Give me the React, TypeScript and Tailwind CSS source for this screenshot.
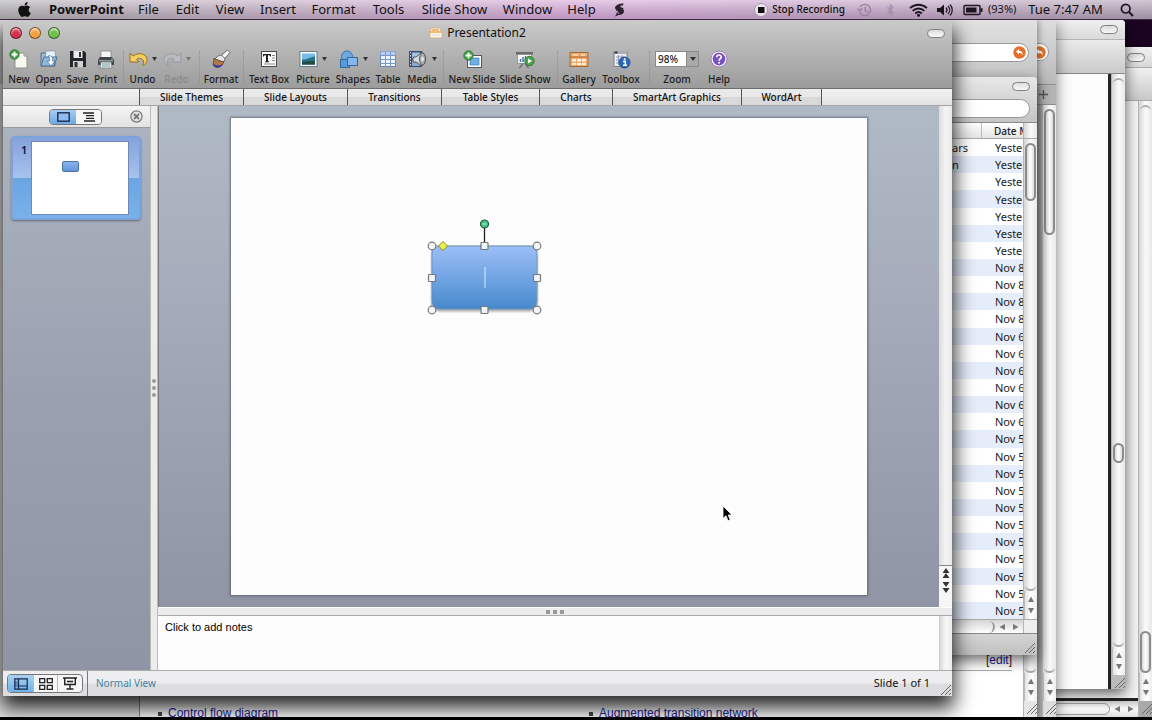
import type { ReactNode } from "react";
import { FaApple } from "react-icons/fa";

const UI = "font-['Noto_Sans','Open_Sans',sans-serif]";

/* ---------- scrollbars and window furniture ---------- */

function Tri({ dir }: { dir: "up" | "down" | "left" | "right" }) {
  const d = {
    up: "M3 0.5 6 6H0Z",
    down: "M3 5.5 6 0H0Z",
    left: "M0.5 3 6 0V6Z",
    right: "M5.5 3 0 0V6Z",
  }[dir];
  return (
    <svg width="6" height="6" viewBox="0 0 6 6" className="shrink-0">
      <path d={d} fill="#777" />
    </svg>
  );
}

function VArrows() {
  return (
    <div className="flex h-7 shrink-0 flex-col items-center justify-around border-l border-[#bbb] bg-gradient-to-r from-[#e2e2e2] via-white to-[#eee] py-0.5">
      <Tri dir="up" />
      <Tri dir="down" />
    </div>
  );
}

function Grip() {
  return (
    <svg width="14" height="14" viewBox="0 0 14 14" className="shrink-0">
      <path d="M3 13 13 3M7 13 13 7M11 13 13 11" stroke="#666" strokeWidth="1" fill="none" />
    </svg>
  );
}

const TRACK = "flex w-[14px] shrink-0 flex-col border-l border-[#b4b4b4] bg-gradient-to-r from-[#d6d6d6] via-[#fafafa] to-[#e9e9e9]";
const THUMB = "mx-px rounded-full border-2 border-[#8b8b8b] bg-gradient-to-r from-[#d8d8d8] via-white to-[#dcdcdc]";

function Pill() {
  return (
    <button
      aria-label="Toggle toolbar"
      className="h-[9px] w-[18px] rounded-full border border-[#808080] bg-gradient-to-b from-[#ddd] to-[#f8f8f8]"
    />
  );
}

function Orange() {
  return (
    <svg width="13" height="13" viewBox="0 0 13 13" className="shrink-0">
      <circle cx="6.500" cy="6.500" r="6.200" fill="#e0702a" />
      <path d="M3 5.600 6 3V4.700C8.800 4.700 10 6.200 9.600 9.300 8.800 7.500 8 6.900 6 6.900V8.300Z" fill="#fff" />
    </svg>
  );
}

/* ---------- toolbar icons ---------- */

const icons: Record<string, ReactNode> = {
  New: (
    <svg width="20" height="20" viewBox="0 0 20 20">
      <path d="M6 4h9l3 3v12H6Z" fill="#f6f8f2" stroke="#8a9384" />
      <path d="M15 4v3h3" fill="#ddd" stroke="#8a9384" />
      <circle cx="5.500" cy="5.500" r="4.700" fill="#3f9a45" stroke="#23702c" strokeWidth=".8" />
      <path d="M5.500 2.500v6M2.500 5.500h6" stroke="#fff" strokeWidth="1.800" />
    </svg>
  ),
  Open: (
    <svg width="20" height="20" viewBox="0 0 20 20">
      <path d="M2 17V4h5l2 2h7v11Z" fill="#9db9d4" stroke="#50708f" />
      <path d="M7 2h9l1 9H6Z" fill="#e9f2fa" stroke="#7890a8" strokeWidth=".7" />
      <path d="M2 17 5 8h13l-3 9Z" fill="#8db9de" stroke="#4c7194" />
      <path d="M9 7c4-1 5 2 4.500 5h2.500l-4 5-4-5h2.500c.3-2 .2-4-1.500-5Z" fill="#fff" stroke="#54789c" strokeWidth=".8" />
    </svg>
  ),
  Save: (
    <svg width="20" height="20" viewBox="0 0 20 20">
      <path d="M2 2h14l2 2v14H2Z" fill="#242528" />
      <rect x="5.500" y="2" width="9" height="7" fill="#e9ecef" />
      <rect x="11" y="3" width="2" height="5" fill="#333" />
      <rect x="5" y="12" width="10" height="6" fill="#cfd3d8" />
      <rect x="6.500" y="13" width="3" height="5" fill="#2e3033" />
    </svg>
  ),
  Print: (
    <svg width="20" height="20" viewBox="0 0 20 20">
      <rect x="5" y="2" width="10" height="7" fill="#f4f5f6" stroke="#83878b" strokeWidth=".8" />
      <path d="M4 8h12l2 3v5H2v-5Z" fill="#41464b" />
      <path d="M3 11h14v1.500H3Z" fill="#93999f" />
      <path d="M5 13h10l1 6H4Z" fill="#e9eef0" stroke="#777" strokeWidth=".7" />
      <path d="M6 15h8M6 17h8" stroke="#6c9e9a" />
      <circle cx="16" cy="10" r=".8" fill="#7ed957" />
    </svg>
  ),
  Undo: (
    <svg width="19" height="16" viewBox="0 0 19 16">
      <path d="M1 2v9h9L7.500 8.500C10 6.500 13.500 7 14.500 10c.4 1.600 0 3-1 4.500 3.500-1.500 5-4 4.300-7C16.500 2.500 9.500 1 4 5Z" fill="#f3cf63" stroke="#9b7018" />
    </svg>
  ),
  Redo: (
    <svg width="19" height="16" viewBox="0 0 19 16">
      <path d="M18 2v9H9l2.500-2.500C9 6.500 5.500 7 4.500 10c-.4 1.600 0 3 1 4.500C2 13 .5 10.500 1.200 7.500 2.500 2.500 9.500 1 15 5Z" fill="#b9bbc2" stroke="#9799a1" />
    </svg>
  ),
  Format: (
    <svg width="20" height="20" viewBox="0 0 20 20">
      <path d="M16.500 1 19 3.500 13.500 10 9.500 7Z" fill="#f8f8f8" stroke="#5a5a5a" strokeWidth=".9" />
      <path d="M7 7c3-2 7 1 7 4l-2 2-8-3Z" fill="#e3e3e8" stroke="#555" strokeWidth=".8" />
      <path d="M3 9c1 1 7 4 10 3.500-1 3-3 5.500-6 6C4 18.500 2 17 2 15c1-2 .5-4 1-6Z" fill="#b07a48" stroke="#5a3a24" strokeWidth=".7" />
      <path d="M2 14.500c3 2.500 7 2 10 .5-1 2-3 3.700-5.500 3.700S2.400 17 2 14.500Z" fill="#3f3f9c" />
    </svg>
  ),
  "Text Box": (
    <svg width="18" height="18" viewBox="0 0 18 18">
      <rect x="1.500" y="1.500" width="15" height="15" fill="#fafafa" stroke="#4b4b4b" />
      <path d="M3 4h8v2.500h-.8L9.500 5.200H8V11l1 .5v.8H5v-.8l1-.5V5.200H4.500L3.800 6.500H3Z" fill="#222" />
      <path d="M12 5.500h3M12 8h3M12 10.500h3M4 14h11" stroke="#888" />
    </svg>
  ),
  Picture: (
    <svg width="19" height="18" viewBox="0 0 19 18">
      <rect x="1" y="1.500" width="17" height="15" fill="#fff" stroke="#6a7d8b" />
      <rect x="3" y="3.500" width="13" height="11" fill="#73bdea" />
      <path d="M3 9c3 1.500 5-.5 7-1s4-2 6-1.500v8H3Z" fill="#2d7188" />
      <path d="M3 12c5-1.500 9-.5 13-1v3.500H3Z" fill="#1e4c46" />
    </svg>
  ),
  Shapes: (
    <svg width="20" height="19" viewBox="0 0 20 19">
      <circle cx="8" cy="6.500" r="5.500" fill="#6faadf" stroke="#3771ad" />
      <rect x="1.500" y="9.500" width="9" height="8" fill="#5b9ad6" stroke="#2f689f" />
      <rect x="8.500" y="7.500" width="10" height="8" fill="#83b9ea" stroke="#2f689f" />
    </svg>
  ),
  Table: (
    <svg width="18" height="18" viewBox="0 0 18 18">
      <rect x="1.500" y="1.500" width="15" height="15" fill="#edf4fd" stroke="#6685b8" />
      <rect x="1.500" y="1.500" width="15" height="3.500" fill="#b7cdf0" />
      <path d="M6.500 1.500v15M11.500 1.500v15M1.500 5.500h15M1.500 9.500h15M1.500 13.500h15" stroke="#7c98c9" />
    </svg>
  ),
  Media: (
    <svg width="20" height="18" viewBox="0 0 20 18">
      <rect x="1" y="1" width="13" height="16" fill="#394e6e" />
      <rect x="4" y="2.500" width="8" height="6" fill="#a9c2dd" />
      <rect x="4" y="10" width="8" height="6" fill="#8eabc9" />
      <path d="M2.500 2v15" stroke="#cdd8e6" strokeDasharray="1.500 1.500" />
      <path d="M5 7h3l6-5c4 2 5 11 0 14L8 12H5Z" fill="#d6d8db" stroke="#4a4c50" strokeWidth=".9" />
      <ellipse cx="14.500" cy="9" rx="3" ry="6" fill="#a7aaae" stroke="#4a4c50" strokeWidth=".8" />
      <ellipse cx="14.500" cy="9" rx="1.200" ry="2.500" fill="#eee" />
    </svg>
  ),
  "New Slide": (
    <svg width="19" height="19" viewBox="0 0 19 19">
      <rect x="4.500" y="5.500" width="14" height="12" fill="#fff" stroke="#54585c" />
      <rect x="7" y="8" width="9" height="7" fill="#6fb0e4" stroke="#3f78ab" strokeWidth=".7" />
      <circle cx="5.500" cy="5.500" r="4.700" fill="#3fa045" stroke="#23702c" strokeWidth=".8" />
      <path d="M5.500 2.500v6M2.500 5.500h6" stroke="#fff" strokeWidth="1.800" />
    </svg>
  ),
  "Slide Show": (
    <svg width="20" height="19" viewBox="0 0 20 19">
      <rect x="1" y="2" width="17" height="2.500" fill="#6a6d70" />
      <rect x="2.500" y="4.500" width="14" height="9" fill="#f6f7f8" stroke="#85898c" strokeWidth=".8" />
      <path d="M5.500 12V9M8 12V7M10.500 12V6" stroke="#4b74a8" strokeWidth="1.500" />
      <path d="M8 13.500 4.500 18M10 13.500l3.500 4.500" stroke="#5a5d60" strokeWidth="1.200" />
      <circle cx="14.500" cy="11" r="4.700" fill="#4aa548" stroke="#286f2b" strokeWidth=".8" />
      <path d="M13 8.500v5l4-2.500Z" fill="#fff" />
    </svg>
  ),
  Gallery: (
    <svg width="20" height="17" viewBox="0 0 20 17">
      <rect x="1" y="1.500" width="18" height="14" fill="#f0a966" stroke="#a4683a" />
      <path d="M1.500 6h17" stroke="#a4683a" />
      <path d="M4 4h5M12 4h4" stroke="#fbe2c8" strokeWidth="1.500" />
      <rect x="3" y="8" width="4" height="2.500" fill="#fff1e0" />
      <rect x="8" y="8" width="4" height="2.500" fill="#fff1e0" />
      <rect x="13" y="8" width="4" height="2.500" fill="#fff1e0" />
      <rect x="3" y="12" width="4" height="2" fill="#fff1e0" />
      <rect x="8" y="12" width="4" height="2" fill="#fff1e0" />
      <rect x="13" y="12" width="4" height="2" fill="#fff1e0" />
    </svg>
  ),
  Toolbox: (
    <svg width="19" height="19" viewBox="0 0 19 19">
      <rect x="2" y="1.500" width="13" height="15" fill="#eef0f3" stroke="#7c8087" />
      <rect x="2" y="1" width="13" height="3" fill="#a9adb5" />
      <path d="M2.500 2.500h3" stroke="#333" strokeWidth="2" />
      <path d="M4 7h9M4 10h6M4 13h5M6.500 5v10M10 5v4" stroke="#8b9bb4" />
      <circle cx="12.500" cy="12.500" r="5.500" fill="#2f69b5" stroke="#1f4680" strokeWidth=".8" />
      <path d="M11 11.500h2.300v3.500M11 15.300h4" stroke="#fff" strokeWidth="1.400" fill="none" />
      <circle cx="12.700" cy="9.300" r="1.100" fill="#fff" />
    </svg>
  ),
  Help: (
    <svg width="18" height="18" viewBox="0 0 18 18">
      <circle cx="9" cy="9" r="8" fill="#fff" stroke="#8a6fb5" strokeWidth=".8" />
      <circle cx="9" cy="9" r="6.400" fill="#7a52bd" />
      <path d="M6.800 7.300C6.800 4.300 11.400 4.400 11.300 7.100 11.200 8.700 9.100 8.700 9.100 10.700" fill="none" stroke="#fff" strokeWidth="1.600" />
      <circle cx="9.100" cy="12.800" r="1" fill="#fff" />
    </svg>
  ),
};

function Tool({ name, w, menu, dim }: { name: string; w: string; menu?: boolean; dim?: boolean }) {
  return (
    <button className={`flex shrink-0 flex-col items-center ${w} ${dim ? "text-[#8b8b8b]" : "text-[#1c1c1c]"}`}>
      <span className="flex h-6 items-center gap-1">
        {icons[name]}
        {menu && (
          <svg width="5" height="4" viewBox="0 0 5 4">
            <path d="M0 0H5L2.500 4Z" fill={dim ? "#777" : "#333"} />
          </svg>
        )}
      </span>
      <span className="text-[10px] leading-4 font-medium whitespace-nowrap">{name}</span>
    </button>
  );
}

function Sep() {
  return (
    <div className="flex w-2 shrink-0 justify-center py-1">
      <div className="h-8 border-l border-dotted border-[#8f8f8f]" />
    </div>
  );
}

/* ---------- menu bar ---------- */

function MenuBar() {
  const menus: [string, string][] = [
    ["File", "w-[39px]"],
    ["Edit", "w-[39px]"],
    ["View", "w-[46px]"],
    ["Insert", "w-[50px]"],
    ["Format", "w-[61px]"],
    ["Tools", "w-[49px]"],
    ["Slide Show", "w-[83px]"],
    ["Window", "w-[63px]"],
    ["Help", "w-[45px]"],
  ];
  return (
    <header className="relative z-10 flex h-5 shrink-0 items-center border-b border-[#3d2742] bg-gradient-to-r from-[#b3b1b3] via-[#d7a9da] to-[#b3a3b8] pr-[18px] text-[13px] text-[#111]">
      <div className="absolute inset-0 bg-gradient-to-b from-white/40 to-black/10" />
      <nav className="relative flex items-center">
        <button aria-label="Apple menu" className="flex w-[49px] justify-center">
          <FaApple size={17} />
        </button>
        <button className="w-20 text-left text-[13px] font-bold whitespace-nowrap">PowerPoint</button>
        {menus.map(([m, w]) => (
          <button key={m} className={`${w} text-center whitespace-nowrap`}>
            {m}
          </button>
        ))}
        <button aria-label="Scripts" className="ml-2.5">
          <svg width="11" height="14" viewBox="0 0 11 14">
            <path d="M9.500.5C5 .5 1 2.500 1 4.800 1 7 5 6.500 5.500 8 4 8.500 2.500 9 2.500 10.800L1 13.500 4.500 12c3.500 0 5.500-1.500 5.500-4C10 5.500 6.500 5.500 5.500 4.300 7 3 9.500 3 9.500.5Z" fill="#2b2230" />
            <path d="M1.500 6 4 10 8 9 9.500 5 6 4Z" fill="#2b2230" />
            <path d="M7 2 9 5M3 8l2 3" stroke="#d3b4d8" strokeWidth=".8" />
          </svg>
        </button>
      </nav>
      <div className="relative ml-auto flex items-center whitespace-nowrap">
        <button className="flex items-center gap-1 text-[10px] font-medium">
          <svg width="14" height="14" viewBox="0 0 14 14">
            <circle cx="7" cy="7" r="6.500" fill="#ece4ee" stroke="#a597a8" />
            <rect x="4" y="4" width="6.500" height="6" fill="#111" />
          </svg>
          Stop Recording
        </button>
        <svg className="ml-3" width="15" height="14" viewBox="0 0 15 14">
          <path d="M3 4A5.700 5.700 0 1 1 2.500 9M0.500 5.500 3 8 5 5M8.300 3.500V7.500L11 9" fill="none" stroke="#9a809f" strokeWidth="1.300" />
        </svg>
        <svg className="ml-[14px]" width="9" height="14" viewBox="0 0 9 14">
          <path d="M1.500 4 7 9.500 4.500 12V2L7 4.500 1.500 10" fill="none" stroke="#a58dab" strokeWidth="1.200" />
        </svg>
        <svg className="ml-[14px]" width="19" height="14" viewBox="0 0 19 14">
          <path d="M1 5.200C6 .6 13 .6 18 5.200M3.600 7.900c3.500-3.200 8.300-3.200 11.800 0M6.200 10.500c2-1.800 4.600-1.800 6.600 0" fill="none" stroke="#1c1420" strokeWidth="1.800" />
          <circle cx="9.500" cy="12.300" r="1.500" fill="#1c1420" />
        </svg>
        <svg className="ml-2" width="17" height="14" viewBox="0 0 17 14">
          <path d="M1 5h3l4-3.500v11L4 9H1Z" fill="#1c1420" />
          <path d="M10 4.700c1.200 1.300 1.200 3.300 0 4.600M12 3c2.200 2.300 2.200 5.700 0 8M14 1.500c3 3 3 8 0 11" fill="none" stroke="#1c1420" strokeWidth="1.200" />
        </svg>
        <svg className="ml-[10px]" width="21" height="12" viewBox="0 0 21 12">
          <rect x="1" y="1.500" width="16" height="9" rx="1" fill="none" stroke="#1c1420" strokeWidth="1.400" />
          <rect x="3" y="3.500" width="10.500" height="5" fill="#1c1420" />
          <path d="M17.500 4.200h2v3.600h-2Z" fill="#1c1420" />
        </svg>
        <span className="ml-1 w-[29px] text-[11px]">(93%)</span>
        <span className="ml-2 w-[81px] text-center text-[13px]">Tue 7:47 AM</span>
        <svg className="ml-[14px]" width="14" height="14" viewBox="0 0 14 14">
          <circle cx="5.700" cy="5.700" r="4.300" fill="none" stroke="#1c1420" strokeWidth="1.700" />
          <path d="M9 9l4 4" stroke="#1c1420" strokeWidth="2" />
        </svg>
      </div>
    </header>
  );
}

/* ---------- background windows ---------- */

function FarWindow() {
  return (
    <section className="absolute top-[27px] right-0 bottom-0 flex w-[500px] flex-col overflow-hidden rounded-tl bg-white">
      <div className="flex h-5 shrink-0 items-center justify-end bg-gradient-to-b from-[#f2f2f2] to-[#d8d8d8] pr-[7px]">
        <Pill />
      </div>
      <div className="h-[34px] shrink-0 border-y border-[#aaa] bg-gradient-to-b from-[#f0f0f0] to-[#c8c8c8]" />
      <div className="flex min-h-0 flex-1">
        <div className="flex min-w-0 flex-1 flex-col bg-[#f4f4f4]">
          <div className="flex-1" />
          <div className="h-[3px] bg-[#222]" />
          <div className="flex h-4 items-center bg-gradient-to-b from-[#ccc] via-[#f8f8f8] to-[#ddd]">
            <div className="h-3 flex-1 rounded-full border border-[#999]" />
            <div className="flex w-7 justify-between px-1">
              <Tri dir="left" />
              <Tri dir="right" />
            </div>
          </div>
        </div>
        <div className={TRACK}>
          <div className="mx-px mt-1 flex-1 rounded-t-full border-t-2 border-[#aaa]" />
          <div className={`h-[42px] ${THUMB}`} />
          <VArrows />
          <div className="h-4 bg-[#aaa]">
            <Grip />
          </div>
        </div>
      </div>
    </section>
  );
}

function DocumentWindow() {
  return (
    <section className="absolute top-0 right-[27px] bottom-7 flex w-[500px] flex-col overflow-hidden rounded-tr bg-white shadow-[0_4px_14px_rgba(0,0,0,.65)]">
      <div className="flex h-5 shrink-0 items-center justify-end border-b border-[#b5b5b5] bg-gradient-to-b from-[#efefef] to-[#dadada] pr-[7px]">
        <Pill />
      </div>
      <div className="h-[34px] shrink-0 border-b border-[#888] bg-gradient-to-b from-[#ebebeb] to-[#cacaca]" />
      <div className="flex min-h-0 flex-1">
        <div className="flex-1 bg-[#fdfdfd]" />
        <div className="w-[3px] bg-[#222]" />
        <div className={TRACK}>
          <div className="mx-px mt-1 flex-[9] rounded-t-full border-t-2 border-[#aaa]" />
          <div className={`h-5 shrink-0 ${THUMB}`} />
          <div className="mx-px flex-[4.500] rounded-b-full border-b-2 border-[#aaa]" />
          <VArrows />
          <div className="h-[14px] bg-[#bbb]">
            <Grip />
          </div>
        </div>
      </div>
    </section>
  );
}

function BrowserBehind() {
  return (
    <section className="absolute top-0 right-[96px] bottom-0 flex w-[500px] flex-col overflow-hidden bg-white shadow-[0_4px_14px_rgba(0,0,0,.5)]">
      <div className="flex h-[64px] shrink-0 items-center justify-end bg-gradient-to-b from-[#dedede] to-[#b9b9b9] pr-[7px]">
        <div className="flex h-[18px] w-40 items-center justify-end rounded-full border border-[#999] bg-white pr-0.5">
          <Orange />
        </div>
      </div>
      <div className="flex h-[21px] shrink-0 items-center justify-end border-y border-[#8f8f8f] bg-[#b3b3b3] pr-2">
        <svg width="9" height="9" viewBox="0 0 9 9">
          <path d="M4.500 0v9M0 4.500h9" stroke="#555" strokeWidth="1.300" />
        </svg>
      </div>
      <div className="flex min-h-0 flex-1 justify-end bg-[#aaa]">
        <div className={TRACK}>
          <div className={`mt-1 h-[126px] ${THUMB}`} />
          <div className="mx-px flex-1 rounded-b-full border-b-2 border-[#aaa]" />
          <VArrows />
          <div className="h-4 bg-[#ddd]">
            <Grip />
          </div>
        </div>
      </div>
    </section>
  );
}

function Browser() {
  return (
    <section className="absolute top-0 right-[115px] bottom-0 left-0 flex flex-col overflow-hidden bg-white shadow-[0_0_8px_rgba(0,0,0,.5)]">
      <div className="flex h-[64px] shrink-0 items-center justify-end bg-gradient-to-b from-[#e2e2e2] to-[#c2c2c2] pr-[8px]">
        <label className="flex h-[19px] w-48 items-center justify-end rounded-full border border-[#999] bg-white pr-0.5">
          <input aria-label="Search the web" className="w-24 bg-transparent outline-none" />
          <Orange />
        </label>
      </div>
      <div className="flex min-h-0 flex-1">
        <div className="w-[140px] shrink-0 border-r border-[#888] bg-[#e4e4e4]" />
        <div className="flex min-w-0 flex-1 flex-col justify-end pr-[11px] font-['Liberation_Sans',sans-serif] text-[12px] text-[#22229a]">
          <div className="flex h-5 items-start justify-end border-b border-[#aaa]">
            <a href="#edit">
              <span className="text-[#222]">[</span>edit<span className="text-[#222]">]</span>
            </a>
          </div>
          <div className="flex h-[46px] items-end pl-[18px] leading-[14px]">
            <div className="flex h-[11px] w-[431px] items-start gap-1.5">
              <span className="mt-1.5 h-1 w-1 bg-[#444]" />
              <a href="#control" className="underline">
                Control flow diagram
              </a>
            </div>
            <div className="flex h-[11px] items-start gap-1.5">
              <span className="mt-1.5 h-1 w-1 bg-[#444]" />
              <a href="#network" className="underline">
                Augmented transition network
              </a>
            </div>
          </div>
        </div>
        <div className={TRACK}>
          <div className="mx-px flex-1 rounded-b-full border-b-2 border-[#aaa]" />
          <VArrows />
          <div className="h-4 bg-[#e6e6e6]">
            <Grip />
          </div>
        </div>
      </div>
    </section>
  );
}

const dates = [
  ...Array(7).fill("Yeste"),
  ...Array(4).fill("Nov 8"),
  ...Array(6).fill("Nov 6"),
  ...Array(11).fill("Nov 5"),
];

function Finder() {
  return (
    <section className="absolute top-[57px] right-[115px] bottom-[62px] flex w-[500px] flex-col overflow-hidden rounded-t bg-[#d0d0d0] shadow-[0_5px_14px_rgba(0,0,0,.6)]">
      <div className="flex h-[46px] shrink-0 flex-col items-end gap-2 border-b border-[#8a8a8a] bg-gradient-to-b from-[#e8e8e8] to-[#c4c4c4] pt-[5px] pr-[7px]">
        <Pill />
        <input aria-label="Search files" className="h-[19px] w-48 rounded-full border border-[#999] bg-white outline-none" />
      </div>
      <div className="flex min-h-0 flex-1">
        <div className="flex min-w-0 flex-1 flex-col">
          <table className="flex min-h-0 flex-1 flex-col overflow-hidden bg-white text-[11px] leading-none text-[#1a1a1a]">
            <thead className="flex h-4 shrink-0 border-b border-[#aaa] bg-gradient-to-b from-white to-[#e4e4e4]">
              <tr className="flex flex-1 justify-end">
                <th className="w-[30px] border-r border-[#bbb]" />
                <th className="flex w-[41px] items-center overflow-hidden pl-3 text-[10px] font-medium whitespace-nowrap">Date M</th>
              </tr>
            </thead>
            <tbody className="flex min-h-0 flex-1 flex-col">
              {dates.map((d, i) => (
                <tr key={i} className="flex min-h-0 flex-1 items-center justify-end odd:bg-white even:bg-[#e6edfa]">
                  <td className="w-[30px]">{i === 0 ? "ars" : i === 1 ? "n" : ""}</td>
                  <td className="w-[41px] overflow-hidden py-1 pl-[13px] whitespace-nowrap">{d}</td>
                </tr>
              ))}
            </tbody>
          </table>
          <div className="flex h-[14px] shrink-0 items-center border-t border-[#aaa] bg-gradient-to-b from-[#d5d5d5] to-white">
            <div className="h-3 flex-1 rounded-full border-r-2 border-[#999]" />
            <div className="flex w-7 justify-between px-1">
              <Tri dir="left" />
              <Tri dir="right" />
            </div>
          </div>
        </div>
        <div className={TRACK}>
          <div className="h-4 border-b border-[#aaa]" />
          <div className={`mt-1 h-[58px] ${THUMB}`} />
          <div className="mx-px flex-1 rounded-b-full border-b-2 border-[#aaa]" />
          <VArrows />
          <div className="h-[14px] border-t border-[#aaa] bg-[#eee]" />
        </div>
      </div>
      <div className="flex h-[22px] shrink-0 items-end justify-end border-t border-[#888] bg-gradient-to-b from-[#d4d4d4] to-[#c0c0c0] p-px">
        <Grip />
      </div>
    </section>
  );
}

/* ---------- presentation window ---------- */

function Light({ tone, label }: { tone: string; label: string }) {
  return <button aria-label={label} className={`h-3 w-3 rounded-full border border-black/50 shadow-[inset_0_2px_2px_rgba(255,255,255,.6)] ${tone}`} />;
}

function Toolbar() {
  return (
    <div className="flex h-[42px] shrink-0 items-start pt-px pl-px">
      <Tool name="New" w="w-[30px]" />
      <Tool name="Open" w="w-[29px]" />
      <Tool name="Save" w="w-[29px]" />
      <Tool name="Print" w="w-[27px]" />
      <Sep />
      <Tool name="Undo" w="w-[31px]" menu />
      <Tool name="Redo" w="w-[37px]" menu dim />
      <Sep />
      <Tool name="Format" w="w-[36px]" />
      <Sep />
      <Tool name="Text Box" w="w-[44px]" />
      <Tool name="Picture" w="w-[44px]" menu />
      <Tool name="Shapes" w="w-[36px]" menu />
      <Tool name="Table" w="w-[34px]" />
      <Tool name="Media" w="w-[34px]" menu />
      <Sep />
      <Tool name="New Slide" w="w-[50px]" />
      <Tool name="Slide Show" w="w-[56px]" />
      <Sep />
      <Tool name="Gallery" w="w-[36px]" />
      <Tool name="Toolbox" w="w-[48px]" />
      <Sep />
      <div className="flex w-[48px] shrink-0 flex-col items-center text-[#1c1c1c]">
        <div className="flex h-6 items-center">
          <input
            id="zoom"
            defaultValue="98%"
            className="h-4 w-8 border border-[#8a8a8a] bg-white px-0.5 text-[10px] leading-3 font-medium outline-none"
          />
          <button aria-label="Zoom levels" className="flex h-4 w-3 items-center justify-center border border-l-0 border-[#8a8a8a] bg-[#a9a9a9]">
            <svg width="6" height="4" viewBox="0 0 6 4">
              <path d="M0 0H6L3 4Z" fill="#333" />
            </svg>
          </button>
        </div>
        <label htmlFor="zoom" className="text-[10px] leading-4 font-medium">
          Zoom
        </label>
      </div>
      <Tool name="Help" w="w-[36px]" />
    </div>
  );
}

function GalleryTabs() {
  const tabs: [string, string][] = [
    ["Slide Themes", "w-[104px]"],
    ["Slide Layouts", "w-[104px]"],
    ["Transitions", "w-[94px]"],
    ["Table Styles", "w-[98px]"],
    ["Charts", "w-[73px]"],
    ["SmartArt Graphics", "w-[129px]"],
    ["WordArt", "w-[80px]"],
  ];
  return (
    <div className="flex h-[18px] shrink-0 border-y border-t-[#6d6d6d] border-b-[#a5a5a5] bg-gradient-to-b from-[#f2f2f2] to-[#e2e2e4] pl-[136px] text-[10px] font-medium text-[#111]">
      <div className="flex border-l border-[#555]">
        {tabs.map(([t, w]) => (
          <button
            key={t}
            className={`${w} border-r border-[#555] bg-gradient-to-b from-[#e9e9e9] from-50% to-[#d9d9da] to-50% text-center leading-4 whitespace-nowrap`}
          >
            {t}
          </button>
        ))}
      </div>
    </div>
  );
}

function SlidesPane() {
  return (
    <aside className="flex w-[147px] shrink-0 flex-col">
      <div className="flex h-[22px] shrink-0 items-center border-b border-[#999] bg-gradient-to-b from-[#f4f4f4] to-[#e2e2e2] pr-[7px] pl-[46px]">
        <div className="flex h-4 overflow-hidden rounded border border-[#777]">
          <button aria-label="Slides" className="flex w-[26px] items-center justify-center bg-gradient-to-b from-[#a9ccf2] to-[#6ca8e6]">
            <svg width="13" height="10" viewBox="0 0 13 10">
              <rect x=".8" y=".8" width="11.400" height="8.400" fill="#8fbdf0" stroke="#1c2c4c" strokeWidth="1.400" />
            </svg>
          </button>
          <button aria-label="Outline" className="flex w-[25px] items-center justify-center bg-[#f6f6f6]">
            <svg width="12" height="10" viewBox="0 0 12 10">
              <path d="M0 1h11M3 3.700h8M3 6.300h8M1 9h11" stroke="#222" strokeWidth="1.300" />
            </svg>
          </button>
        </div>
        <button aria-label="Close pane" className="ml-auto">
          <svg width="13" height="13" viewBox="0 0 13 13">
            <circle cx="6.500" cy="6.500" r="5.600" fill="#e4e4e4" stroke="#777" strokeWidth="1.200" />
            <path d="M4 4l5 5M9 4 4 9" stroke="#777" strokeWidth="1.800" />
          </svg>
        </button>
      </div>
      <div className="flex-1 bg-gradient-to-b from-[#aab3be] via-[#9ba0b0] to-[#9095a6] px-2 pt-2">
        <button className="flex h-[84px] w-[130px] gap-1 rounded border-2 border-[#7ba4dd] p-[3px] shadow-[0_1px_2px_rgba(0,0,0,.4)] [background:linear-gradient(#85a3dc,#a6c2ee_50%,#6aa5e2_50%,#79b1ea)]">
          <span className="w-[11px] pt-px text-right text-[10px] leading-4 font-bold text-[#101c50]">1</span>
          <span className="block h-[74px] w-[98px] border border-[#7288b8] bg-white pt-[19px] pl-[30px]">
            <span className="block h-[11px] w-[17px] rounded-xs border border-[#4a70a8] bg-gradient-to-b from-[#8ab4ee] to-[#5f96d8]" />
          </span>
        </button>
      </div>
    </aside>
  );
}

function Handle({ x, y, round }: { x: number; y: number; round?: boolean }) {
  return round ? (
    <circle cx={x} cy={y} r="3.800" fill="#f4f6f8" stroke="#777" strokeWidth="1.200" />
  ) : (
    <rect x={x - 3.5} y={y - 3.5} width="7" height="7" rx=".8" fill="#eef3fa" stroke="#777" strokeWidth="1.200" />
  );
}

function SelectedShape() {
  return (
    <svg className="absolute top-[100px] left-[195px]" width="118" height="102" viewBox="0 0 118 102">
      <defs>
        <linearGradient id="fill" x1="0" y1="0" x2="0" y2="1">
          <stop offset="0" stopColor="#9cbff8" />
          <stop offset="1" stopColor="#478acd" />
        </linearGradient>
        <filter id="drop" x="-10%" y="-10%" width="120%" height="130%">
          <feDropShadow dx="0" dy="2" stdDeviation="1.200" floodColor="#445" floodOpacity=".5" />
        </filter>
      </defs>
      <rect x="6" y="28" width="105" height="63" rx="8" fill="url(#fill)" stroke="#6089c0" strokeWidth=".8" filter="url(#drop)" />
      <rect x="5.500" y="27.500" width="105.500" height="64" fill="none" stroke="#9aa" strokeWidth=".6" />
      <path d="M59 49v21" stroke="#dce9fa" />
      <path d="M58.500 9v17" stroke="#222" strokeWidth="1.300" />
      <circle cx="58.500" cy="6" r="4" fill="#45c088" stroke="#245c42" strokeWidth="1.200" />
      <path d="M56.500 6h4" stroke="#c5f2dc" />
      <Handle x={6} y={28} round />
      <Handle x={111} y={28} round />
      <Handle x={6} y={92} round />
      <Handle x={111} y={92} round />
      <Handle x={58.5} y={28} />
      <Handle x={58.5} y={92} />
      <Handle x={6} y={60} />
      <Handle x={111} y={60} />
      <path d="M17 23.500 21.500 28 17 32.500 12.500 28Z" fill="#eef04a" stroke="#8a8a28" />
    </svg>
  );
}

function Presentation() {
  return (
    <main className="absolute top-0 right-[200px] bottom-[21px] left-[3px] flex flex-col overflow-hidden rounded-t-md bg-[#e6e6e6] shadow-[0_10px_20px_2px_rgba(0,0,0,.85)]">
      <div className="shrink-0 bg-gradient-to-b from-[#cacaca] to-[#9c9c9c]">
        <div className="relative flex h-[26px] items-center justify-center gap-1 text-[12px] text-[#111]">
          <div className="absolute inset-y-0 left-[7px] flex items-center gap-[7px]">
            <Light tone="bg-[#d3304a]" label="Close" />
            <Light tone="bg-[#f0a040]" label="Minimize" />
            <Light tone="bg-[#6cc04c]" label="Zoom window" />
          </div>
          <svg width="14" height="12" viewBox="0 0 14 12">
            <path d="M2.500 1h8L13 5v6H1V5Z" fill="#fdf7e8" stroke="#c9a878" strokeWidth=".8" />
            <path d="M1 5h12M3 3h7" stroke="#e8ab58" strokeWidth="1.300" />
            <path d="M3 8h8" stroke="#dbb" strokeDasharray="1.500 1" />
          </svg>
          Presentation2
          <div className="absolute inset-y-0 right-[7px] flex items-center">
            <Pill />
          </div>
        </div>
        <Toolbar />
      </div>
      <GalleryTabs />
      <div className="flex min-h-0 flex-1">
        <SlidesPane />
        <div className="flex w-2 shrink-0 flex-col items-center justify-center gap-[3px] border-x border-[#bbb] bg-[#ececec]">
          <span className="h-1 w-1 rounded-full bg-[#999]" />
          <span className="h-1 w-1 rounded-full bg-[#999]" />
          <span className="h-1 w-1 rounded-full bg-[#999]" />
        </div>
        <div className="flex min-w-0 flex-1 flex-col">
          <div className="flex min-h-0 flex-1">
            <div className="flex min-w-0 flex-1 justify-center border-l border-[#777] bg-gradient-to-b from-[#b0bac5] via-[#a2a7b7] to-[#9095a6] py-3">
              <div className="relative aspect-[4/3] h-full bg-[#fdfdfd] shadow-[0_0_2px_1px_rgba(60,66,76,.6)]">
                <SelectedShape />
              </div>
            </div>
            <div className="flex w-[13px] flex-col justify-end bg-gradient-to-r from-[#dcdcdc] via-[#f4f4f4] to-[#e8e8e8]">
              <div className="flex h-[42px] flex-col items-center border-t border-[#888] bg-[#f6f6f6] pt-0.5">
                <svg width="8" height="26" viewBox="0 0 8 26">
                  <path d="M4 0 7.500 5H.5ZM4 5 7.500 10H.5ZM4 19 7.500 14H.5ZM4 25 7.500 20H.5Z" fill="#333" />
                </svg>
              </div>
            </div>
          </div>
          <div className="flex h-[9px] shrink-0 items-center justify-center gap-[3px] border-y border-t-white border-b-[#aaa] bg-[#ececec]">
            <span className="h-1 w-1 bg-[#999]" />
            <span className="h-1 w-1 bg-[#999]" />
            <span className="h-1 w-1 bg-[#999]" />
          </div>
          <div className="flex h-[54px] shrink-0 bg-[#fdfdfd]">
            <textarea
              aria-label="Notes"
              defaultValue="Click to add notes"
              className="flex-1 resize-none px-[7px] pt-[3px] font-['Liberation_Sans',sans-serif] text-[11px] leading-4 text-black outline-none"
            />
            <div className="w-[13px] border-l border-[#ccc] bg-gradient-to-r from-[#dcdcdc] via-[#f8f8f8] to-[#ececec]" />
          </div>
        </div>
      </div>
      <footer className="flex h-[26px] shrink-0 items-center border-t border-[#aaa] bg-gradient-to-b from-[#eeeef0] from-45% to-[#dddddf] to-55% pl-1 text-[11px]">
        <div className="flex h-[19px] overflow-hidden rounded border border-[#777] bg-[#f6f6f6]">
          <button aria-label="Normal view" className="flex w-[25px] items-center justify-center bg-gradient-to-b from-[#a9d0f2] to-[#6db2ea]">
            <svg width="14" height="12" viewBox="0 0 14 12">
              <path d="M.8.8h12.400v10.400H.8ZM4.500.8v10.400M4.500 8h8.700" fill="none" stroke="#14294a" strokeWidth="1.200" />
              <path d="M1 4h3M1 6h3M1 8h3" stroke="#14294a" strokeWidth=".7" />
            </svg>
          </button>
          <button aria-label="Slide sorter" className="flex w-[25px] items-center justify-center border-x border-[#bbb]">
            <svg width="14" height="12" viewBox="0 0 14 12">
              <path d="M.7.700h5v4h-5ZM8.300.7h5v4h-5ZM.7 7.300h5v4h-5ZM8.300 7.300h5v4h-5Z" fill="none" stroke="#222" strokeWidth="1.300" />
            </svg>
          </button>
          <button aria-label="Slide show view" className="flex w-6 items-center justify-center">
            <svg width="14" height="13" viewBox="0 0 14 13">
              <path d="M0 1h14M1.700 1v6.500h10.600V1M4 4.500h6M7 7.500v4M3.500 12h7" fill="none" stroke="#222" strokeWidth="1.400" />
            </svg>
          </button>
        </div>
        <div className="ml-1 h-full w-px bg-[#777]" />
        <span className="ml-2 text-[10px] text-[#4080a4]">Normal View</span>
        <span className="ml-auto text-[#111]">Slide 1 of 1</span>
        <div className="ml-2 self-end">
          <Grip />
        </div>
      </footer>
      <svg className="absolute right-[218px] bottom-[174px]" width="12" height="17" viewBox="0 0 12 17">
        <path d="M1 1v12.500l3-2.800 2 5 2.200-1-2-4.700H10Z" fill="#000" stroke="#fff" strokeWidth=".8" />
      </svg>
    </main>
  );
}

export default function App() {
  return (
    <div className={`flex h-screen w-full flex-col overflow-hidden bg-[#1b0420] ${UI}`}>
      <MenuBar />
      <div className="relative min-h-0 flex-1 overflow-hidden">
        <FarWindow />
        <DocumentWindow />
        <BrowserBehind />
        <Browser />
        <Finder />
        <Presentation />
      </div>
      <div className="h-[3px] shrink-0 bg-black" />
    </div>
  );
}
